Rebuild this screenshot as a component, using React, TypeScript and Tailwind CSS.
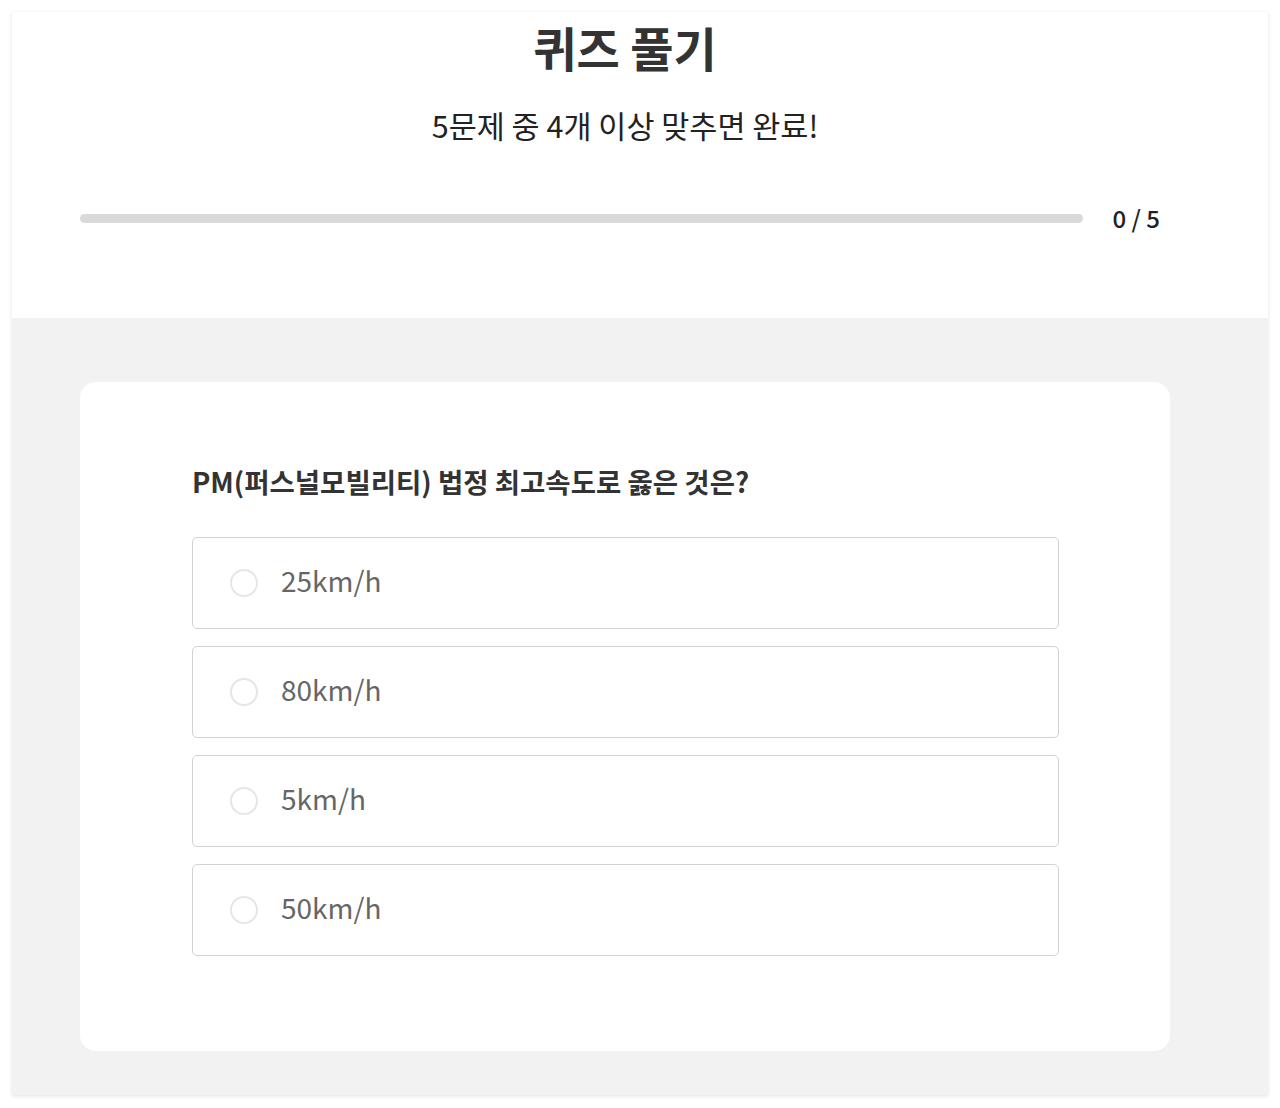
import { useState } from 'react'

const options = ['25km/h', '80km/h', '5km/h', '50km/h']

export default function App() {
  const [selected, setSelected] = useState<number | null>(null)
  const total = 5
  const answered = 0

  return (
    <div
      className="min-h-[1108px] bg-white px-[12px] pt-[12px] pb-[12px]"
      style={{ fontFamily: '"Noto Sans CJK KR", "Noto Sans", sans-serif' }}
    >
      <div className="shadow-[0_1px_4px_rgba(0,0,0,0.12)]">
        <header className="h-[306px] bg-white pt-[3px]">
          <div className="pl-[68px] pr-[98px] text-center">
            <h1 className="text-[47px] font-bold leading-[64px] text-[#333]">
              퀴즈 풀기
            </h1>
            <p className="mt-[25px] text-[30.5px] leading-[42px] text-[#222]">
              5문제 중 4개 이상 맞추면 완료!
            </p>
          </div>
          <div className="mt-[56px] flex items-center pl-[68px] pr-[108px]">
            <div className="h-[9px] flex-1 overflow-hidden rounded-full bg-[#d9d9d9]">
              <div
                className="h-full rounded-full bg-[#4a90e2]"
                style={{ width: `${(answered / total) * 100}%` }}
              />
            </div>
            <span className="ml-[29px] text-[24px] font-medium leading-[32px] text-[#222]">
              {answered} / {total}
            </span>
          </div>
        </header>

        <section className="bg-[#f2f2f2] pl-[68px] pr-[98px] pt-[64px] pb-[44px]">
          <div className="rounded-[16px] bg-white pl-[112px] pr-[111px] pt-[80px] pb-[95px]">
            <h2 className="text-[27.5px] font-bold leading-[38px] text-[#333]">
              PM(퍼스널모빌리티) 법정 최고속도로 옳은 것은?
            </h2>
            <ul className="mt-[37px] flex flex-col gap-[17px]">
              {options.map((option, index) => (
                <li key={option}>
                  <button
                    type="button"
                    onClick={() => setSelected(index)}
                    className="flex h-[92px] w-full items-center rounded-[5px] border-[1.5px] border-[#d2d2d2] bg-white pl-[37px] text-left"
                  >
                    <span
                      className={
                        selected === index
                          ? 'h-[28px] w-[28px] shrink-0 rounded-full border-[8px] border-[#4a90e2]'
                          : 'h-[28px] w-[28px] shrink-0 rounded-full border-2 border-[#e6e6e6]'
                      }
                    />
                    <span className="ml-[23px] -translate-y-[3px] text-[28px] leading-[40px] text-[#666]">
                      {option}
                    </span>
                  </button>
                </li>
              ))}
            </ul>
          </div>
        </section>
      </div>
    </div>
  )
}
